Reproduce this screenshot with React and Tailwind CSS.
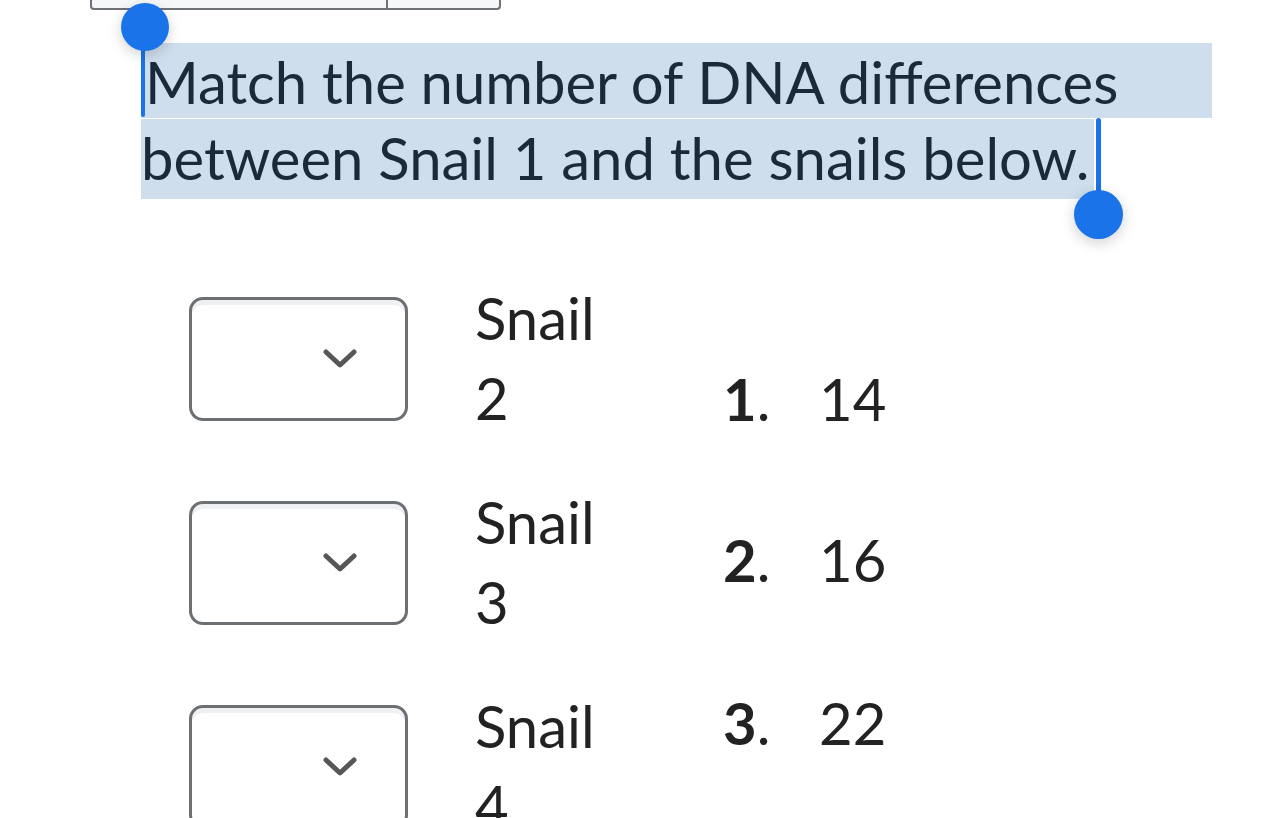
import React from 'react';

const Chevron = () => (
  <svg width="34" height="20" viewBox="0 0 34 20" fill="none">
    <path d="M3 3 L17 16 L31 3" stroke="#555759" strokeWidth="5" strokeLinecap="round" strokeLinejoin="round" />
  </svg>
);

const Dropdown = () => (
  <div className="w-[219px] h-[124px] shrink-0 rounded-[14px] border-[3px] border-[#6d7073] bg-white shadow-[inset_0_5px_0_#eef0f3] flex items-center justify-end pr-[48px]">
    <Chevron />
  </div>
);

const Handle = ({ className, stickClass, circleClass }) => (
  <div className={className}>
    <div className={stickClass} />
    <div className={circleClass} />
  </div>
);

const snails = ['2', '3', '4'];
const answers = [
  { n: '1', v: '14', cls: 'h-[161px]' },
  { n: '2', v: '16', cls: 'h-[163px]' },
  { n: '3', v: '22', cls: 'h-[160px]' },
];

export default function App() {
  return (
    <div className="relative w-[1284px] h-[818px] overflow-hidden bg-white font-['Lato','Open_Sans',sans-serif]">
      {/* cut-off box at the top */}
      <div className="ml-[90px] w-[411px] h-[10px] flex border-x-[2px] border-b-[2px] border-[#6e7175] rounded-b-[4px] bg-[#f5f7f8]">
        <div className="w-[296px] border-r-[2px] border-[#6e7175]" />
        <div className="flex-1" />
      </div>

      {/* selected prompt */}
      <div className="relative ml-[141px] mt-[33px] w-[1071px] text-[58px] leading-[80px] text-[#1b2a3a]">
        <div className="h-[75px] bg-[#cfdeec] pl-[4px] leading-[78px]">Match the number of DNA differences</div>
        <div className="h-[80px]">
          <span className="inline-block h-[80px] bg-[#cfdeec] pr-[4px] leading-[78px]">between Snail 1 and the snails below.</span>
        </div>

        {/* selection handles */}
        <Handle
          className="absolute left-[-20px] top-[-40px] w-[50px] h-[120px]"
          stickClass="absolute left-[0px] top-[36px] ml-[20px] w-[4px] h-[78px] rounded-full bg-[#1a73e8]"
          circleClass="absolute left-[0px] top-[0px] w-[48px] h-[48px] rounded-full bg-[#1a73e8] shadow-[0_4px_14px_rgba(0,0,0,0.18)]"
        />
        <Handle
          className="absolute left-[933px] top-[75px] w-[50px] h-[120px]"
          stickClass="absolute left-[22px] top-[0px] w-[5px] h-[84px] rounded-full bg-[#1a73e8]"
          circleClass="absolute left-[0px] top-[72px] w-[49px] h-[49px] rounded-full bg-[#1a73e8] shadow-[0_4px_14px_rgba(0,0,0,0.18)]"
        />
      </div>

      {/* matching rows */}
      <div className="flex mt-[99px] text-[58px] leading-[80px] text-[#222222]">
        <div className="ml-[189px] flex flex-col gap-[80px]">
          {snails.map((s) => (
            <div key={s} className="flex items-start h-[124px]">
              <Dropdown />
              <div className="ml-[67px] mt-[-19px] w-[130px]">Snail {s}</div>
            </div>
          ))}
        </div>
        <div className="ml-[118px] mt-[62px] flex flex-col">
          {answers.map((a) => (
            <div key={a.n} className={`flex ${a.cls}`}>
              <div className="w-[96px]">
                <span className="font-bold">{a.n}</span>.
              </div>
              <div>{a.v}</div>
            </div>
          ))}
        </div>
      </div>
    </div>
  );
}
